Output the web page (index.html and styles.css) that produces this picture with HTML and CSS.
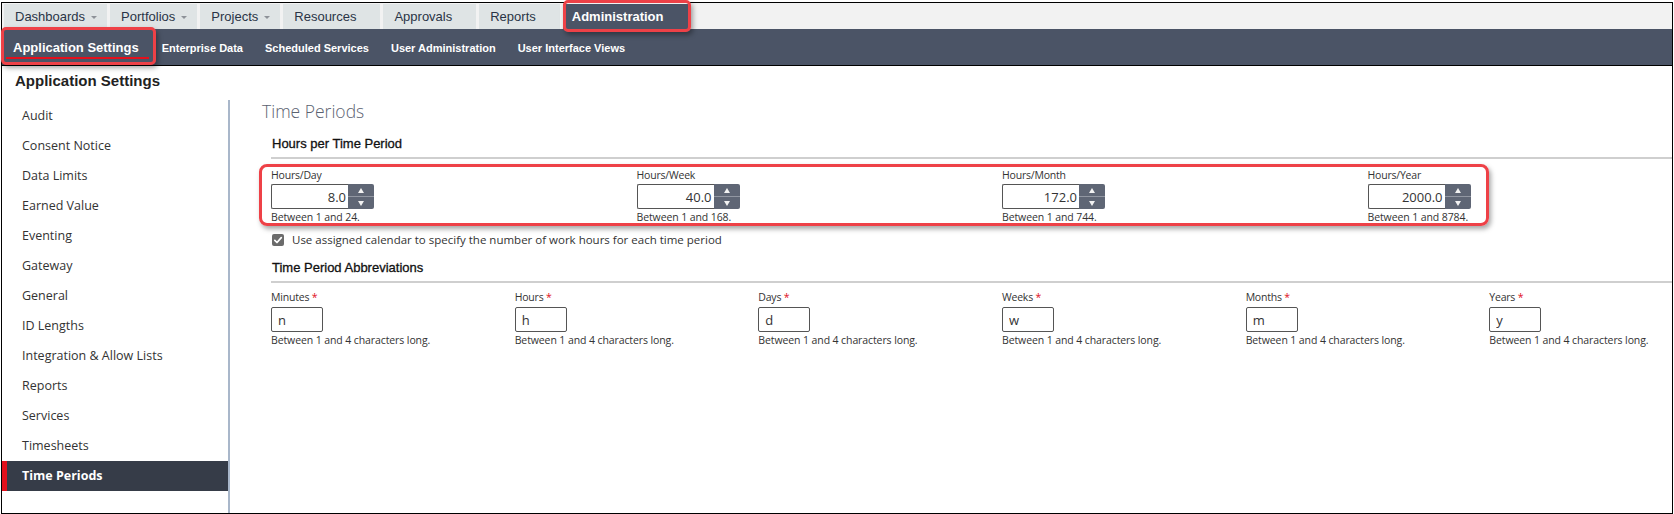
FILE: index.html
```html
<!DOCTYPE html>
<html lang="en">
<head>
<meta charset="utf-8">
<title>Application Settings - Time Periods</title>
<link rel="stylesheet" href="styles.css">
</head>
<body>
<div class="frame">
  <nav class="tabbar">
    <div class="tab has-menu">Dashboards<span class="caret"></span></div>
    <div class="tab has-menu">Portfolios<span class="caret"></span></div>
    <div class="tab has-menu">Projects<span class="caret"></span></div>
    <div class="tab">Resources</div>
    <div class="tab">Approvals</div>
    <div class="tab">Reports</div>
    <div class="tab tab-active">Administration</div>
  </nav>
  <nav class="subnav">
    <div class="sub-item sub-active">Application Settings</div>
    <div class="sub-item">Enterprise Data</div>
    <div class="sub-item">Scheduled Services</div>
    <div class="sub-item">User Administration</div>
    <div class="sub-item">User Interface Views</div>
  </nav>
  <div class="page-title">Application Settings</div>
  <div class="columns">
    <aside class="sidebar">
      <div class="nav-item">Audit</div>
      <div class="nav-item">Consent Notice</div>
      <div class="nav-item">Data Limits</div>
      <div class="nav-item">Earned Value</div>
      <div class="nav-item">Eventing</div>
      <div class="nav-item">Gateway</div>
      <div class="nav-item">General</div>
      <div class="nav-item">ID Lengths</div>
      <div class="nav-item">Integration &amp; Allow Lists</div>
      <div class="nav-item">Reports</div>
      <div class="nav-item">Services</div>
      <div class="nav-item">Timesheets</div>
      <div class="nav-item nav-active">Time Periods</div>
    </aside>
    <main class="main">
      <h2 class="main-title">Time Periods</h2>
      <section class="section">
        <h3 class="section-title">Hours per Time Period</h3>
        <div class="hours-row">
          <div class="field">
            <label class="field-label">Hours/Day</label>
            <div class="spin"><input class="spin-input" type="text" value="8.0"><div class="stepper"><span class="step step-up"></span><span class="step step-down"></span></div></div>
            <div class="hint">Between 1 and 24.</div>
          </div>
          <div class="field">
            <label class="field-label">Hours/Week</label>
            <div class="spin"><input class="spin-input" type="text" value="40.0"><div class="stepper"><span class="step step-up"></span><span class="step step-down"></span></div></div>
            <div class="hint">Between 1 and 168.</div>
          </div>
          <div class="field">
            <label class="field-label">Hours/Month</label>
            <div class="spin"><input class="spin-input" type="text" value="172.0"><div class="stepper"><span class="step step-up"></span><span class="step step-down"></span></div></div>
            <div class="hint">Between 1 and 744.</div>
          </div>
          <div class="field">
            <label class="field-label">Hours/Year</label>
            <div class="spin"><input class="spin-input" type="text" value="2000.0"><div class="stepper"><span class="step step-up"></span><span class="step step-down"></span></div></div>
            <div class="hint">Between 1 and 8784.</div>
          </div>
        </div>
        <div class="check-row">
          <svg class="checkbox" width="12" height="12" viewBox="0 0 12 12"><rect x="0" y="0" width="12" height="12" rx="2" fill="#6b6b6b"/><path d="M2.8 6.3 L5 8.5 L9.3 3.6" fill="none" stroke="#fff" stroke-width="1.7" stroke-linecap="round" stroke-linejoin="round"/></svg>
          <span>Use assigned calendar to specify the number of work hours for each time period</span>
        </div>
        <h3 class="section-title section-title-2">Time Period Abbreviations</h3>
        <div class="abbr-row">
          <div class="field"><label class="field-label">Minutes <span class="req">*</span></label><input class="abbr-input" type="text" value="n"><div class="hint">Between 1 and 4 characters long.</div></div>
          <div class="field"><label class="field-label">Hours <span class="req">*</span></label><input class="abbr-input" type="text" value="h"><div class="hint">Between 1 and 4 characters long.</div></div>
          <div class="field"><label class="field-label">Days <span class="req">*</span></label><input class="abbr-input" type="text" value="d"><div class="hint">Between 1 and 4 characters long.</div></div>
          <div class="field"><label class="field-label">Weeks <span class="req">*</span></label><input class="abbr-input" type="text" value="w"><div class="hint">Between 1 and 4 characters long.</div></div>
          <div class="field"><label class="field-label">Months <span class="req">*</span></label><input class="abbr-input" type="text" value="m"><div class="hint">Between 1 and 4 characters long.</div></div>
          <div class="field"><label class="field-label">Years <span class="req">*</span></label><input class="abbr-input" type="text" value="y"><div class="hint">Between 1 and 4 characters long.</div></div>
        </div>
      </section>
    </main>
  </div>
  <div class="annot annot-admin"></div>
  <div class="annot annot-app"></div>
  <div class="annot annot-hours"></div>
</div>
</body>
</html>
```

FILE: styles.css
```css
* { box-sizing: border-box; }
html, body { margin: 0; padding: 0; background: #fff; }
body {
  padding: 2px 1px 0 1px;
  font-family: "Open Sans", "Noto Sans", sans-serif;
  color: #333;
}
.frame {
  position: relative;
  width: 1672px;
  height: 512px;
  border: 1px solid #000;
  display: flex;
  flex-direction: column;
}

/* top tabs */
.tabbar {
  flex: none;
  height: 26px;
  background: #f2f2f2;
  display: flex;
  gap: 3px;
  padding: 1px 0 0 2px;
  font-family: "Liberation Sans", Arial, sans-serif;
  font-size: 13px;
}
.tab {
  height: 25px;
  line-height: 25px;
  padding: 0 24px 0 11px;
  background: #dfe4e5;
  color: #2a3446;
  white-space: nowrap;
}
.tab.has-menu { padding-right: 10px; }
.caret {
  display: inline-block;
  width: 0;
  height: 0;
  border-left: 3px solid transparent;
  border-right: 3px solid transparent;
  border-top: 3px solid #8d9198;
  margin-left: 6px;
  vertical-align: 2px;
}
.tab-active {
  background: #4b5466;
  color: #fff;
  font-weight: 700;
  padding-left: 9px;
}

/* sub nav */
.subnav {
  flex: none;
  height: 37px;
  background: #4b5466;
  border-bottom: 1px solid #000;
  display: flex;
  align-items: flex-start;
  font-family: "Liberation Sans", Arial, sans-serif;
  font-weight: 700;
  font-size: 11px;
  color: #fff;
}
.sub-item {
  padding: 11px 11px 0;
  line-height: 16px;
  white-space: nowrap;
}
.sub-active {
  font-size: 13px;
  margin-left: 4px;
  margin-right: 2px;
  padding: 11px 10px 1px 7px;
  border-bottom: 2px solid #e3101c;
}

/* page heading */
.page-title {
  flex: none;
  height: 34px;
  padding: 6px 0 0 13px;
  font-family: "Liberation Sans", Arial, sans-serif;
  font-weight: 700;
  font-size: 15px;
  line-height: 18px;
  color: #222;
}

.columns {
  flex: 1;
  display: flex;
  min-height: 0;
}
.sidebar {
  flex: none;
  width: 228px;
  border-right: 2px solid #a9b7ca;
  padding-top: 1px;
}
.nav-item {
  height: 30px;
  line-height: 30px;
  padding-left: 20px;
  font-size: 12.5px;
  color: #333;
  white-space: nowrap;
}
.nav-active {
  background: #363c48;
  color: #fff;
  font-weight: 700;
  border-left: 5px solid #e3101c;
  padding-left: 15px;
}

.main {
  flex: 1;
  min-width: 0;
  overflow: hidden;
  padding-left: 32px;
}
.main-title {
  margin: 0;
  font-size: 17.5px;
  font-weight: 300;
  line-height: 22px;
  color: #5b6271;
}
.section { padding-left: 9px; }
.section-title {
  margin: 14px 0 0;
  padding: 0 0 5px 1px;
  border-bottom: 2px solid #cfcfcf;
  font-family: "Liberation Sans", Arial, sans-serif;
  font-weight: 400;
  font-size: 13px;
  line-height: 16px;
  color: #111;
  -webkit-text-stroke: 0.3px #111;
}
.section-title-2 { margin-top: 12px; }

.hours-row {
  display: grid;
  grid-template-columns: repeat(4, 365.5px);
  padding-top: 9px;
}
.abbr-row {
  display: grid;
  grid-template-columns: repeat(6, 243.67px);
  padding-top: 7px;
}
.field-label {
  display: block;
  font-size: 10.5px;
  line-height: 14px;
  color: #333;
  letter-spacing: -0.2px;
  white-space: nowrap;
}
.req { color: #e0101c; }
.hint {
  margin-top: 1px;
  font-size: 10.5px;
  line-height: 14px;
  letter-spacing: -0.1px;
  color: #333;
  white-space: nowrap;
}
.spin {
  display: flex;
  margin-top: 2px;
  height: 25px;
}
.spin-input {
  width: 77px;
  height: 25px;
  margin: 0;
  border: 1px solid #555;
  border-right: none;
  border-radius: 2px 0 0 2px;
  padding: 0 2px 0 4px;
  text-align: right;
  font-family: "Open Sans", sans-serif;
  font-size: 13px;
  color: #333;
  background: #fff;
  outline: none;
}
.stepper {
  width: 26px;
  height: 25px;
  background: #5f6675;
  border-radius: 0 2px 2px 0;
  display: flex;
  flex-direction: column;
}
.step {
  flex: 1;
  display: flex;
  align-items: center;
  justify-content: center;
}
.step-down { border-top: 1px solid #9297a2; }
.step-up::before {
  content: "";
  border-left: 3px solid transparent;
  border-right: 3px solid transparent;
  border-bottom: 5px solid #f2f2f2;
}
.step-down::before {
  content: "";
  border-left: 3px solid transparent;
  border-right: 3px solid transparent;
  border-top: 5px solid #f2f2f2;
}

.check-row {
  display: flex;
  align-items: center;
  height: 16px;
  margin-top: 8px;
  font-size: 11.5px;
  line-height: 16px;
  color: #333;
  white-space: nowrap;
}
.checkbox { flex: none; margin: 0 8px 0 1px; }

.abbr-input {
  display: block;
  width: 52px;
  height: 25px;
  margin: 3px 0 0;
  border: 1px solid #555;
  border-radius: 2px;
  padding: 0 6px;
  font-family: "Open Sans", sans-serif;
  font-size: 13px;
  color: #333;
  background: #fff;
  outline: none;
}

/* annotation highlight boxes */
.annot {
  position: absolute;
  border: 3px solid #ee4147;
  border-radius: 5px;
  box-shadow: 2px 3px 5px rgba(0, 0, 0, 0.35);
  pointer-events: none;
}
.annot-admin { left: 561px; top: -3px; width: 128px; height: 32px; }
.annot-app { left: -1px; top: 24px; width: 155px; height: 38px; }
.annot-hours { left: 257px; top: 161px; width: 1230px; height: 62px; border-radius: 8px; }
```
